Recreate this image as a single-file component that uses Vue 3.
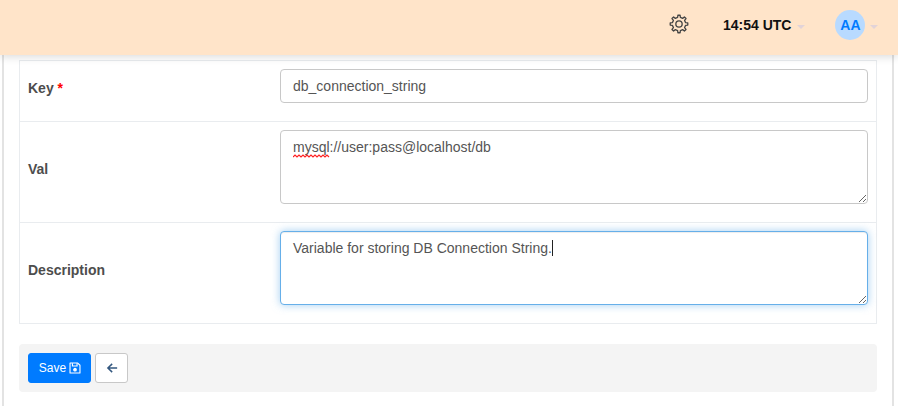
<script setup>
const squiggle = 'M0 3 L2 1 L4 3 L6 1 L8 3 L10 1 L12 3 L14 1 L16 3 L18 1 L20 3 L22 1 L24 3 L26 1 L28 3 L30 1 L32 3 L34 1 L36 3'

// Eight-tooth gear outline, centred on (12, 12).
const gearPath = (() => {
  const teeth = 8
  const outer = 10.6
  const inner = 8
  const points = []
  for (let i = 0; i < teeth; i++) {
    const mid = (i * 2 * Math.PI) / teeth - Math.PI / 2
    const step = (2 * Math.PI) / teeth
    const angles = [
      [mid - step * 0.27, inner],
      [mid - step * 0.16, outer],
      [mid + step * 0.16, outer],
      [mid + step * 0.27, inner]
    ]
    for (const [a, r] of angles) {
      points.push(`${(12 + r * Math.cos(a)).toFixed(2)} ${(12 + r * Math.sin(a)).toFixed(2)}`)
    }
  }
  return `M${points.join('L')}Z`
})()
</script>

<template>
  <div class="page">
    <header class="topbar">
      <svg class="gear" viewBox="0 0 24 24" fill="none" stroke="#444" stroke-width="1.6" stroke-linejoin="round">
        <path :d="gearPath" />
        <circle cx="12" cy="12" r="3.8" />
      </svg>
      <span class="clock">14:54 UTC</span>
      <span class="caret caret-clock"></span>
      <span class="avatar">AA</span>
      <span class="caret"></span>
    </header>

    <main class="content">
      <div class="form-table">
        <div class="row row-key">
          <label class="label">Key <span class="req">*</span></label>
          <input class="control" value="db_connection_string" />
        </div>
        <div class="row">
          <label class="label">Val</label>
          <div class="field">
            <textarea class="control area" spellcheck="false">mysql://user:pass@localhost/db</textarea>
            <svg class="squiggle" width="37" height="4" viewBox="0 0 37 4"><path :d="squiggle" fill="none" stroke="#f22" stroke-width="1.2" /></svg>
          </div>
        </div>
        <div class="row">
          <label class="label">Description</label>
          <div class="field">
            <textarea class="control area focused" spellcheck="false">Variable for storing DB Connection String.</textarea>
            <span class="text-caret"></span>
          </div>
        </div>
      </div>

      <div class="actions">
        <button class="btn btn-save">
          Save
          <svg class="btn-icon" viewBox="0 0 14 14" fill="none" stroke="#fff" stroke-width="1.3">
            <path d="M1.2 1.2h9l2.6 2.6v9H1.2z" stroke-linejoin="round" />
            <path d="M4 1.4v3.2h5.4V1.4" />
            <circle cx="7" cy="9" r="1.5" fill="#fff" />
          </svg>
        </button>
        <button class="btn btn-back" aria-label="Back">
          <svg class="back-icon" viewBox="0 0 14 14" fill="none" stroke="#33577f" stroke-width="1.7">
            <path d="M13 7H2.4M7.2 2.2 2.2 7l5 4.8" />
          </svg>
        </button>
      </div>
    </main>
  </div>
</template>

<style>
html, body { margin: 0; background: #fff; overflow: hidden; }
</style>

<style scoped>
.page {
  width: 898px;
  height: 406px;
  position: relative;
  overflow: hidden;
  font-family: "Liberation Sans", Arial, sans-serif;
  font-size: 14px;
  color: #555;
}
.page::before, .page::after {
  content: "";
  position: absolute;
  top: 0;
  bottom: 0;
  width: 2px;
  background: #e3e3e3;
}
.page::before { left: 2px; }
.page::after { left: 892px; }
.topbar {
  position: relative;
  z-index: 2;
  height: 55px;
  box-sizing: border-box;
  display: flex;
  align-items: center;
  background: #ffe4c9;
  box-shadow: 0 2px 8px rgba(0, 0, 0, .14);
  padding-left: 669px;
}
.gear { width: 20px; height: 20px; margin-top: -7px; }
.clock {
  margin-left: 34px;
  font-weight: 700;
  color: #111;
  margin-top: -5px;
}
.caret {
  width: 0;
  height: 0;
  margin-left: 5px;
  margin-top: -2px;
  border: 4px solid transparent;
  border-top-color: #e2d3d8;
  border-bottom: 0;
}
.caret-clock { margin-left: 6px; }
.avatar {
  margin-left: 30px;
  width: 30px;
  height: 30px;
  border-radius: 50%;
  background: #b8daff;
  color: #007bff;
  font-weight: 700;
  display: flex;
  align-items: center;
  justify-content: center;
  margin-top: -5px;
}
.content { padding: 5px 21px 0 19px; }
.form-table {
  border: 1px solid #e9ecef;
  width: 858px;
  box-sizing: border-box;
}
.row {
  display: grid;
  grid-template-columns: 252px 588px;
  align-items: center;
  padding: 8px 0 18px 8px;
  height: 101px;
  box-sizing: border-box;
  border-top: 1px solid #e9ecef;
}
.row:first-child { border-top: 0; }
.row-key { height: 60px; }
.label { font-weight: 700; color: #4d4d4d; padding-top: 4px; }
.req { color: #f00; }
.field { position: relative; height: 74px; }
.control {
  display: block;
  width: 588px;
  height: 34px;
  box-sizing: border-box;
  padding: 6px 12px;
  border: 1px solid #c8c8c8;
  border-radius: 4px;
  font: 14px/20px "Liberation Sans", Arial, sans-serif;
  color: #555;
  background: #fff;
  outline: none;
}
.area { height: 74px; resize: vertical; }
.focused {
  border-color: #66afe9;
  box-shadow: inset 0 1px 1px rgba(0, 0, 0, .075), 0 0 8px rgba(102, 175, 233, .6);
}
.squiggle { position: absolute; left: 13px; top: 24px; }
.text-caret {
  position: absolute;
  left: 272px;
  top: 9px;
  width: 1px;
  height: 16px;
  background: #222;
}
.actions {
  margin-top: 20px;
  width: 858px;
  height: 48px;
  box-sizing: border-box;
  padding: 9px;
  display: flex;
  gap: 4px;
  background: #f4f4f4;
  border-radius: 4px;
}
.btn {
  height: 30px;
  box-sizing: border-box;
  border-radius: 3px;
  font: 12px "Liberation Sans", Arial, sans-serif;
  display: flex;
  align-items: center;
  justify-content: center;
  padding: 0;
}
.btn-save {
  width: 63px;
  background: #007bff;
  border: 1px solid #007bff;
  color: #fff;
  gap: 3px;
  padding-left: 1px;
}
.btn-icon { width: 12px; height: 12px; }
.btn-back {
  width: 33px;
  background: #fff;
  border: 1px solid #c8c8c8;
}
.back-icon { width: 12px; height: 12px; }
</style>
